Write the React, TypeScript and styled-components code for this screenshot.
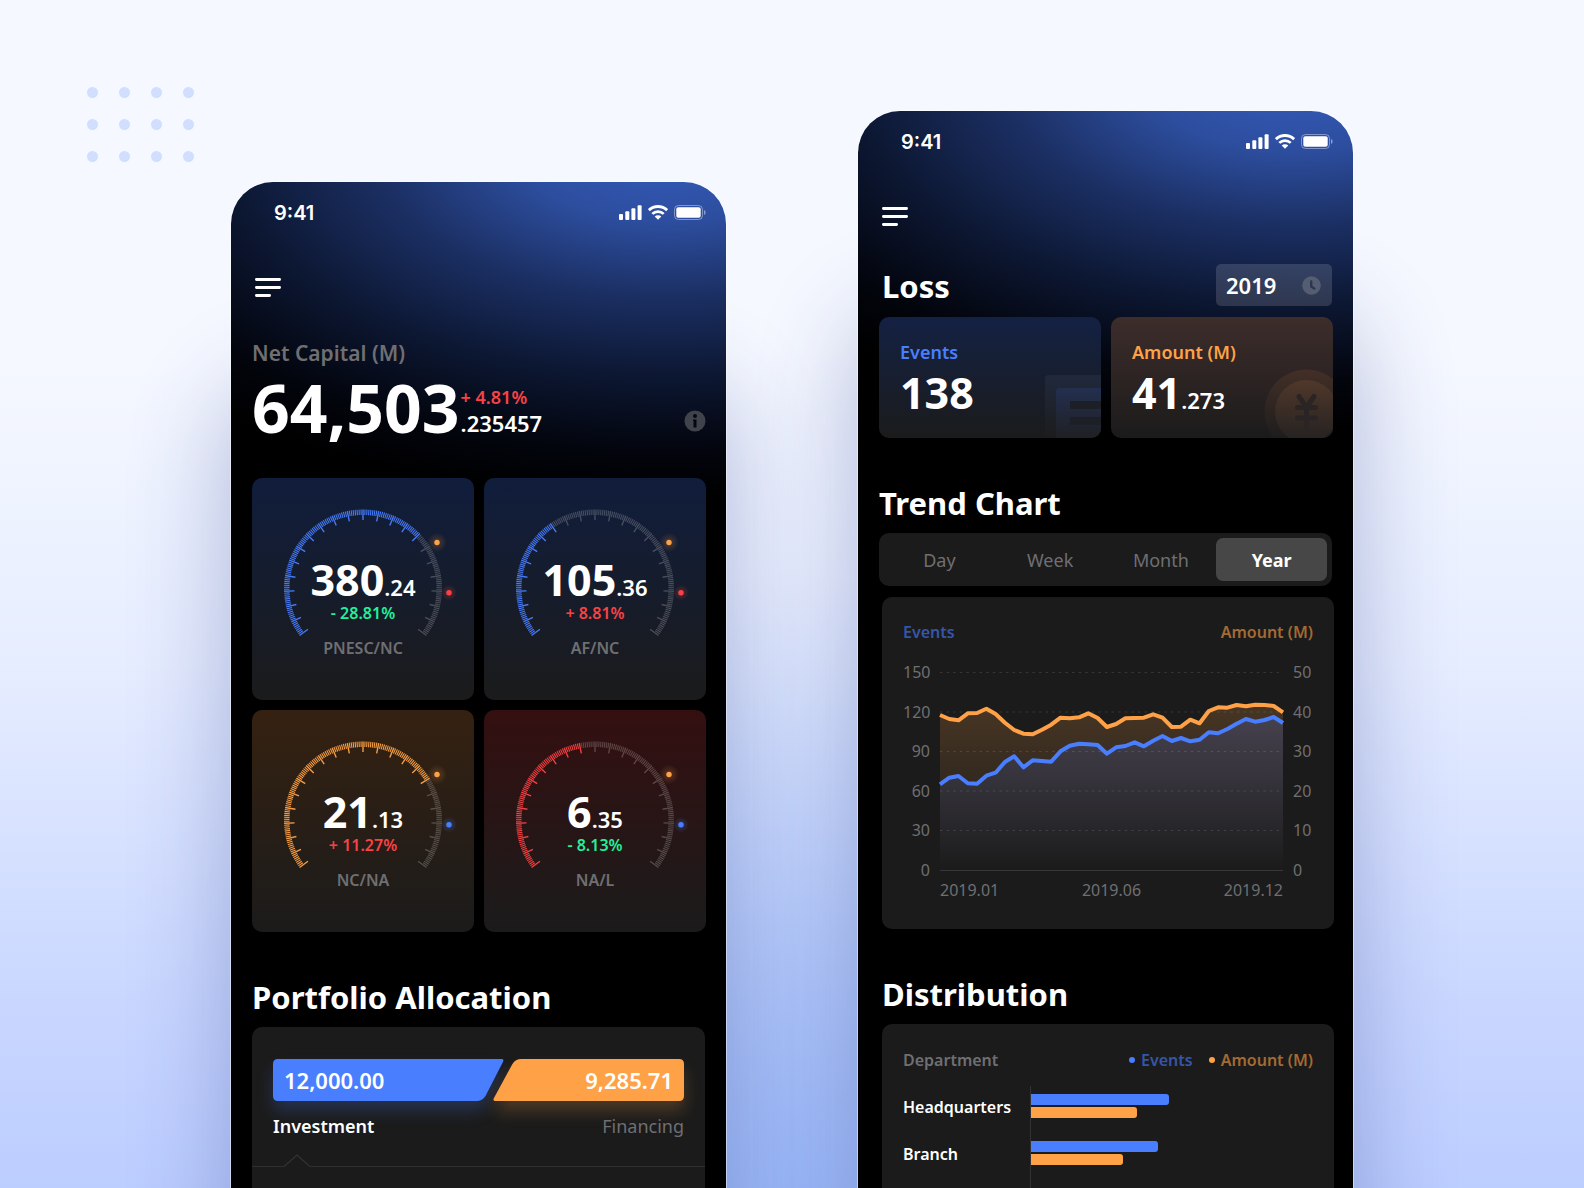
import React, { useState } from "react";
import styled, { createGlobalStyle, css } from "styled-components";

const color = {
  blue: "#497eff",
  orange: "#ffa247",
  red: "#fa4245",
  green: "#22f09a",
  panel: "#1b1b1b",
  muted: "#6f6f72",
};

const GlobalStyle = createGlobalStyle`
  *, *::before, *::after { box-sizing: border-box; }
  body {
    margin: 0;
    font-family: "Noto Sans", "Open Sans", sans-serif;
    color: #fff;
  }
  h2, p, ul { margin: 0; padding: 0; }
  button, select { font: inherit; color: inherit; border: 0; background: none; padding: 0; cursor: pointer; }
`;

const Page = styled.main`
  position: relative;
  display: flex;
  justify-content: center;
  gap: 132px;
  height: 100vh;
  overflow: hidden;
  background:
    radial-gradient(ellipse 340px 620px at 50% 100%, rgba(116, 160, 240, 0.45), rgba(116, 160, 240, 0) 100%),
    linear-gradient(180deg, #f5f8ff 0%, #f5f8ff 30%, #e6edff 56%, #c9d7ff 84%, #bccdff 100%);
`;

const DotGrid = styled.div`
  position: absolute;
  top: 87px;
  left: 87px;
  display: grid;
  grid-template-columns: repeat(4, 11px);
  gap: 21px;
`;

const DecorDot = styled.span`
  height: 11px;
  border-radius: 50%;
  background: #d2deff;
`;

const Phone = styled.section<{ $top: number }>`
  position: relative;
  flex: 0 1 495px;
  min-width: 0;
  margin-top: ${(p) => p.$top}px;
  margin-bottom: -120px;
  padding: 0 20px 0 21px;
  display: flex;
  flex-direction: column;
  border-radius: 42px 42px 0 0;
  background: radial-gradient(
      ellipse 680px 360px at 88% -40px,
      #365cbe 0%,
      #2d4e9f 22%,
      #1b2f63 43%,
      #0c1732 65%,
      #03050d 86%,
      #000 100%
    ),
    #000;
  box-shadow:
    0 0 0 1px rgba(255, 255, 255, 0.45),
    0 210px 100px rgba(34, 54, 130, 0.32);
`;

const StatusBar = styled.header`
  display: flex;
  align-items: center;
  justify-content: space-between;
  height: 62px;
  padding-left: 22px;
`;

const Clock = styled.time`
  font: 600 20px/24px Inter, sans-serif;
`;

const StatusIcons = styled.div`
  display: flex;
  align-items: center;
  gap: 6px;
  padding-bottom: 2px;
`;

const Nav = styled.nav`
  display: flex;
  align-items: center;
  height: 86px;
`;

const MenuButton = styled.button`
  display: flex;
  align-items: center;
  justify-content: center;
  width: 32px;
  height: 32px;
`;

const Caption = styled.p`
  margin-top: 9px;
  font-size: 21px;
  line-height: 28px;
  font-weight: 600;
  color: ${color.muted};
`;

const CapitalRow = styled.div`
  display: flex;
  align-items: flex-end;
  margin-top: 10px;
`;

const CapitalValue = styled.strong`
  font-size: 66px;
  line-height: 60px;
  font-weight: 700;
`;

const CapitalSide = styled.div`
  display: flex;
  flex-direction: column;
  padding-left: 1px;
`;

const Change = styled.span<{ $up: boolean; $large?: boolean }>`
  font-size: ${(p) => (p.$large ? 18 : 16)}px;
  line-height: 24px;
  font-weight: 600;
  color: ${(p) => (p.$up ? color.red : color.green)};
`;

const CapitalFraction = styled.span`
  font-size: 22px;
  line-height: 28px;
  font-weight: 600;
`;

const InfoButton = styled.button`
  width: 22px;
  height: 22px;
  margin: 0 0 5px auto;
`;

const GaugeGrid = styled.div`
  display: grid;
  grid-template-columns: 1fr 1fr;
  gap: 10px;
  margin-top: 41px;
`;

const GaugeCard = styled.article<{ $tint: string }>`
  display: grid;
  border-radius: 10px;
  background: linear-gradient(180deg, ${(p) => p.$tint}, ${color.panel});

  > * {
    grid-area: 1 / 1;
  }
`;

const GaugeDial = styled.svg`
  display: block;
  width: 100%;
`;

const GaugeText = styled.div`
  display: flex;
  flex-direction: column;
  align-items: center;
  padding-top: 81px;
`;

const Figure = styled.p`
  font-size: 43px;
  line-height: 42px;
  font-weight: 700;

  small {
    font-size: 22px;
    line-height: 1;
    font-weight: 600;
  }
`;

const GaugeLabel = styled.p`
  margin-top: 11px;
  font-size: 16px;
  line-height: 24px;
  font-weight: 600;
  color: ${color.muted};
`;

const Heading = styled.h2<{ $flush?: boolean; $shifted?: boolean }>`
  margin-top: ${(p) => (p.$flush ? 0 : 45)}px;
  margin-left: ${(p) => (p.$shifted ? 3 : 0)}px;
  font-size: 31px;
  line-height: 40px;
  font-weight: 700;
`;

const Panel = styled.div<{ $gap?: number; $shifted?: boolean }>`
  margin-top: ${(p) => p.$gap ?? 10}px;
  border-radius: 10px;
  background: ${color.panel};
  ${(p) =>
    p.$shifted &&
    css`
      margin-left: 3px;
      margin-right: -1px;
    `}
`;

const AllocationPanel = styled(Panel)`
  flex: 1;
  margin-right: 1px;
  padding-top: 32px;
`;

const AllocationBars = styled.div`
  display: grid;
  align-items: center;
  margin: 0 21px;

  > * {
    grid-area: 1 / 1;
  }
`;

const AllocationShape = styled.svg`
  display: block;
  width: 100%;
  height: 42px;
  overflow: visible;
`;

const AllocationValues = styled.div`
  z-index: 1;
  display: flex;
  justify-content: space-between;
  padding: 0 11px;
  font-size: 22px;
  line-height: 28px;
  font-weight: 600;
`;

const AllocationTabs = styled.div`
  display: flex;
  justify-content: space-between;
  margin: 13px 21px 0;
`;

const AllocationTab = styled.button<{ $active: boolean }>`
  font-size: 18px;
  line-height: 24px;
  font-weight: ${(p) => (p.$active ? 600 : 400)};
  color: ${(p) => (p.$active ? "#fff" : color.muted)};
`;

const NotchLine = styled.div`
  display: flex;
  align-items: flex-end;
  margin-top: 16px;

  svg {
    display: block;
  }
`;

const NotchRule = styled.span<{ $lead?: boolean }>`
  flex: ${(p) => (p.$lead ? "0 0 32px" : "1")};
  height: 1px;
  background: #2f2f2f;
`;

const LossHeader = styled.div`
  display: flex;
  align-items: flex-end;
  justify-content: space-between;
  margin-top: 5px;
`;

const YearPicker = styled.label`
  display: flex;
  align-items: center;
  justify-content: space-between;
  width: 116px;
  height: 42px;
  margin-right: 1px;
  padding: 0 11px 0 10px;
  border-radius: 5px;
  background: rgba(255, 255, 255, 0.14);
`;

const YearSelect = styled.select`
  appearance: none;
  font-size: 22px;
  line-height: 28px;
  font-weight: 600;

  option {
    color: #000;
  }
`;

const StatGrid = styled.div`
  display: grid;
  grid-template-columns: 1fr 1fr;
  gap: 10px;
  margin-top: 11px;
`;

const StatCard = styled.article<{ $tint: string }>`
  position: relative;
  height: 121px;
  padding: 23px 21px;
  overflow: hidden;
  border-radius: 10px;
  background: linear-gradient(180deg, ${(p) => p.$tint}, ${color.panel});

  svg {
    position: absolute;
    right: 0;
    bottom: 0;
  }
`;

const StatLabel = styled.p<{ $color: string }>`
  margin-bottom: 8px;
  font-size: 18px;
  line-height: 24px;
  font-weight: 600;
  color: ${(p) => p.$color};
`;

const Tabs = styled(Panel)`
  display: grid;
  grid-template-columns: repeat(4, 1fr);
  padding: 5px;
  margin-right: 1px;
`;

const Tab = styled.button<{ $active: boolean }>`
  height: 43px;
  border-radius: 7px;
  font-size: 18px;
  line-height: 24px;
  ${(p) =>
    p.$active
      ? css`
          background: #474747;
          font-weight: 700;
        `
      : css`
          color: ${color.muted};
        `}
`;

const ChartPanel = styled(Panel)`
  padding: 23px 21px 29px;
`;

const LegendRow = styled.div`
  display: flex;
  justify-content: space-between;
  font-size: 16px;
  line-height: 24px;
  font-weight: 600;
  color: ${color.muted};
`;

const LegendGroup = styled.div`
  display: flex;
  gap: 16px;
`;

const LegendName = styled.span<{ $color: string }>`
  color: ${(p) => p.$color};
`;

const LegendKey = styled.span<{ $color: string }>`
  display: flex;
  align-items: center;
  gap: 6px;

  &::before {
    content: "";
    width: 6px;
    height: 6px;
    border-radius: 50%;
    background: ${(p) => p.$color};
  }
`;

const ChartGrid = styled.div`
  display: grid;
  grid-template-columns: 27px 1fr 20px;
  column-gap: 10px;
  margin-top: 18px;
  font-size: 16px;
  line-height: 20px;
  color: ${color.muted};
`;

const AxisColumn = styled.div<{ $align: "left" | "right" }>`
  display: flex;
  flex-direction: column;
  justify-content: space-between;
  height: 218px;
  text-align: ${(p) => p.$align};
`;

const Plot = styled.svg`
  display: block;
  width: 100%;
  height: 218px;
`;

const DateRow = styled.div`
  grid-column: 2;
  display: flex;
  justify-content: space-between;
`;

const DistributionPanel = styled(Panel)`
  flex: 1;
  padding: 24px 21px;
`;

const BarList = styled.ul`
  margin-top: 14px;
  list-style: none;
`;

const BarRow = styled.li`
  display: flex;
  height: 47px;
`;

const BarName = styled.span`
  width: 127px;
  padding-top: 9px;
  font-size: 16px;
  line-height: 24px;
  font-weight: 600;
`;

const BarTrack = styled.div`
  flex: 1;
  display: flex;
  flex-direction: column;
  gap: 2px;
  padding-top: 8px;
  border-left: 1px solid #333;
`;

const Bar = styled.span<{ $color: string }>`
  height: 11px;
  border-radius: 0 3px 3px 0;
  background: ${(p) => p.$color};
`;

function StatusStrip() {
  return (
    <StatusBar>
      <Clock>9:41</Clock>
      <StatusIcons>
        <svg width="23" height="15" viewBox="0 0 23 15" fill="#fff" aria-label="Signal">
          <rect x="0" y="9" width="4" height="6" rx="1" />
          <rect x="6.3" y="6.3" width="4" height="8.7" rx="1" />
          <rect x="12.4" y="3.3" width="4" height="11.7" rx="1" />
          <rect x="18.6" y="0.3" width="4" height="14.7" rx="1" />
        </svg>
        <svg width="20" height="15" viewBox="0 0 20 15" aria-label="Wi-Fi">
          <path d="M0.9 5.2a13 13 0 0 1 18.2 0" stroke="#fff" strokeWidth="2.8" fill="none" />
          <path d="M4.3 8.9a8.2 8.2 0 0 1 11.4 0" stroke="#fff" strokeWidth="2.7" fill="none" />
          <path d="M10 14.7 6.7 11.5a4.7 4.7 0 0 1 6.6 0Z" fill="#fff" />
        </svg>
        <svg width="32" height="15" viewBox="0 0 32 15" aria-label="Battery">
          <rect x="0.5" y="0.5" width="28" height="14" rx="4" fill="none" stroke="#fff" strokeOpacity="0.4" />
          <rect x="2.3" y="2.3" width="24.4" height="10.4" rx="2" fill="#fff" />
          <path d="M30 5v5c1-.4 1.6-1.4 1.6-2.5S31 5.4 30 5Z" fill="#fff" fillOpacity="0.45" />
        </svg>
      </StatusIcons>
    </StatusBar>
  );
}

function Menu() {
  return (
    <Nav>
      <MenuButton aria-label="Open menu">
        <svg width="26" height="19" viewBox="0 0 26 19" stroke="#fff" strokeWidth="2.8" strokeLinecap="round">
          <path d="M1.4 1.5H24.6M1.4 9.5H24.6M1.4 17.5H14.6" />
        </svg>
      </MenuButton>
    </Nav>
  );
}

const MAJOR_STEP = 11.5;
const MAJOR_COUNT = 22;
const MINOR_PER_MAJOR = 8;

function tick(index: number) {
  const major = index % MINOR_PER_MAJOR === 0;
  const degrees = -MAJOR_STEP * (MAJOR_COUNT / 2) + (index * MAJOR_STEP) / MINOR_PER_MAJOR;
  const a = (degrees * Math.PI) / 180;
  const inner = major ? 68.5 : 73.5;
  const at = (r: number) => `${(111 + r * Math.sin(a)).toFixed(2)} ${(110.5 - r * Math.cos(a)).toFixed(2)}`;
  return { major, d: `M${at(79)}L${at(inner)}` };
}

const ticks = Array.from({ length: MAJOR_COUNT * MINOR_PER_MAJOR + 1 }, (_, i) => tick(i));

function Ticks({ from, to, stroke, opacity }: { from: number; to: number; stroke: string; opacity: number }) {
  const range = ticks.slice(from, to);
  const join = (major: boolean) =>
    range
      .filter((t) => t.major === major)
      .map((t) => t.d)
      .join("");
  return (
    <g stroke={stroke} strokeOpacity={opacity}>
      <path d={join(false)} strokeWidth="1.1" />
      <path d={join(true)} strokeWidth="1.4" />
    </g>
  );
}

type GaugeProps = {
  id: string;
  whole: string;
  fraction: string;
  change: string;
  up: boolean;
  label: string;
  filled: number;
  accent: string;
  marker: string;
  tint: string;
};

function Gauge({ id, whole, fraction, change, up, label, filled, accent, marker, tint }: GaugeProps) {
  const split = filled * MINOR_PER_MAJOR + 1;
  return (
    <GaugeCard $tint={tint}>
      <GaugeDial viewBox="0 0 222 222" aria-hidden="true">
        <defs>
          <radialGradient id={`${id}-upper`}>
            <stop offset="0" stopColor={color.orange} stopOpacity="0.24" />
            <stop offset="1" stopColor={color.orange} stopOpacity="0" />
          </radialGradient>
          <radialGradient id={`${id}-lower`}>
            <stop offset="0" stopColor={marker} stopOpacity="0.32" />
            <stop offset="1" stopColor={marker} stopOpacity="0" />
          </radialGradient>
        </defs>
        <Ticks from={split} to={ticks.length} stroke="#fff" opacity={0.22} />
        <Ticks from={0} to={split} stroke={accent} opacity={0.95} />
        <circle cx="185" cy="64.5" r="10" fill={`url(#${id}-upper)`} />
        <circle cx="185" cy="64.5" r="2.7" fill={color.orange} />
        <circle cx="197" cy="114.7" r="8" fill={`url(#${id}-lower)`} />
        <circle cx="197" cy="114.7" r="2.7" fill={marker} />
      </GaugeDial>
      <GaugeText>
        <Figure>
          {whole}
          <small>{fraction}</small>
        </Figure>
        <Change $up={up}>{change}</Change>
        <GaugeLabel>{label}</GaugeLabel>
      </GaugeText>
    </GaugeCard>
  );
}

const gauges: GaugeProps[] = [
  { id: "pnesc", whole: "380", fraction: ".24", change: "- 28.81%", up: false, label: "PNESC/NC", filled: 15, accent: color.blue, marker: color.red, tint: "#101d3c" },
  { id: "af", whole: "105", fraction: ".36", change: "+ 8.81%", up: true, label: "AF/NC", filled: 8, accent: color.blue, marker: color.red, tint: "#101d3c" },
  { id: "nc", whole: "21", fraction: ".13", change: "+ 11.27%", up: true, label: "NC/NA", filled: 16, accent: color.orange, marker: color.blue, tint: "#352111" },
  { id: "nal", whole: "6", fraction: ".35", change: "- 8.13%", up: false, label: "NA/L", filled: 10, accent: color.red, marker: color.blue, tint: "#340f10" },
];

function CapitalScreen() {
  const [side, setSide] = useState<"Investment" | "Financing">("Investment");
  return (
    <Phone $top={182}>
      <StatusStrip />
      <Menu />
      <Caption>Net Capital (M)</Caption>
      <CapitalRow>
        <CapitalValue>64,503</CapitalValue>
        <CapitalSide>
          <Change $up $large>
            + 4.81%
          </Change>
          <CapitalFraction>.235457</CapitalFraction>
        </CapitalSide>
        <InfoButton aria-label="About net capital">
          <svg width="22" height="22" viewBox="0 0 22 22">
            <circle cx="11" cy="11" r="10.5" fill="#40424c" />
            <circle cx="11" cy="6" r="2" fill="#05070f" />
            <path d="M9 9.5h3.5v8h-3v-6.5h-.5z" fill="#05070f" />
          </svg>
        </InfoButton>
      </CapitalRow>
      <GaugeGrid>
        {gauges.map((g) => (
          <Gauge key={g.id} {...g} />
        ))}
      </GaugeGrid>
      <Heading>Portfolio Allocation</Heading>
      <AllocationPanel>
        <AllocationBars>
          <AllocationShape viewBox="0 0 412 42" preserveAspectRatio="none" aria-hidden="true">
            <path
              d="M5 0H229Q232 0 230.5 3L213 37Q210 42 204 42H5Q0 42 0 37V5Q0 0 5 0Z"
              fill={color.blue}
              filter="drop-shadow(0 10px 8px rgba(73,126,255,.22))"
            />
            <path
              d="M249 0H407Q412 0 412 5V37Q412 42 407 42H223Q220 42 221.5 39L240 5Q243 0 249 0Z"
              fill={color.orange}
              filter="drop-shadow(0 10px 8px rgba(255,162,71,.22))"
            />
          </AllocationShape>
          <AllocationValues>
            <span>12,000.00</span>
            <span>9,285.71</span>
          </AllocationValues>
        </AllocationBars>
        <AllocationTabs>
          {(["Investment", "Financing"] as const).map((name) => (
            <AllocationTab key={name} $active={side === name} onClick={() => setSide(name)}>
              {name}
            </AllocationTab>
          ))}
        </AllocationTabs>
        <NotchLine>
          <NotchRule $lead />
          <svg width="26" height="13" viewBox="0 0 26 13" fill="none" stroke="#333" strokeWidth="1.3">
            <path d="M0 12.5 13 1 26 12.5" />
          </svg>
          <NotchRule />
        </NotchLine>
      </AllocationPanel>
    </Phone>
  );
}

const amountLine = [
  225, 237, 241, 220, 219, 206, 222, 248, 270, 281, 283, 269, 254, 233, 235, 232, 220, 234, 261, 252, 235, 234, 233,
  223, 233, 261, 260, 239, 250, 213, 202, 203, 195, 199, 194, 195, 198, 217,
];
const eventLine = [
  433, 413, 408, 430, 431, 407, 398, 366, 349, 382, 361, 363, 365, 334, 317, 311, 313, 315, 341, 322, 318, 307, 319,
  302, 288, 303, 294, 304, 299, 277, 280, 267, 251, 237, 245, 240, 231, 249,
];

const PLOT_WIDTH = 343;
const BASELINE = 208;

function toPoints(values: number[]) {
  return values
    .map((v, i) => `${((i * PLOT_WIDTH) / (values.length - 1)).toFixed(1)},${(v / 3 - 22).toFixed(1)}`)
    .join(" ");
}

function TrendPlot() {
  const amount = toPoints(amountLine);
  const events = toPoints(eventLine);
  const close = ` ${PLOT_WIDTH},${BASELINE} 0,${BASELINE}`;
  return (
    <Plot viewBox={`0 0 ${PLOT_WIDTH} 218`} preserveAspectRatio="none" role="img" aria-label="Events and amount in 2019" overflow="visible">
      <defs>
        <linearGradient id="amount-fill" gradientUnits="userSpaceOnUse" x1="0" y1="40" x2="0" y2={BASELINE}>
          <stop offset="0" stopColor={color.orange} stopOpacity="0.2" />
          <stop offset="1" stopColor={color.orange} stopOpacity="0" />
        </linearGradient>
        <linearGradient id="event-fill" gradientUnits="userSpaceOnUse" x1="0" y1="50" x2="0" y2={BASELINE}>
          <stop offset="0" stopColor="#46424f" />
          <stop offset="0.5" stopColor="#323037" />
          <stop offset="1" stopColor={color.panel} />
        </linearGradient>
      </defs>
      <polygon points={amount + close} fill="url(#amount-fill)" />
      <polygon points={events + close} fill="url(#event-fill)" />
      {[0, 1, 2, 3, 4].map((i) => (
        <line key={i} x1="0" x2={PLOT_WIDTH - 4} y1={10.5 + i * 39.5} y2={10.5 + i * 39.5} stroke="#fff" strokeOpacity="0.12" strokeDasharray="2.5 4.1" />
      ))}
      <line x1="0" x2={PLOT_WIDTH} y1={BASELINE + 0.5} y2={BASELINE + 0.5} stroke="#383838" />
      <polyline points={amount} fill="none" stroke={color.orange} strokeWidth="4" strokeLinejoin="round" />
      <polyline points={events} fill="none" stroke={color.blue} strokeWidth="4" strokeLinejoin="round" />
    </Plot>
  );
}

const departments = [
  { name: "Headquarters", events: 49, amount: 37.5 },
  { name: "Branch", events: 45, amount: 32.5 },
  { name: "", events: 0, amount: 0 },
];

const periods = ["Day", "Week", "Month", "Year"];
const leftAxis = [150, 120, 90, 60, 30, 0];
const rightAxis = [50, 40, 30, 20, 10, 0];

function LossScreen() {
  const [period, setPeriod] = useState("Year");
  return (
    <Phone $top={111}>
      <StatusStrip />
      <Menu />
      <LossHeader>
        <Heading $flush $shifted>
          Loss
        </Heading>
        <YearPicker>
          <YearSelect aria-label="Year" defaultValue="2019">
            <option>2019</option>
            <option>2018</option>
          </YearSelect>
          <svg width="19" height="19" viewBox="0 0 19 19" aria-hidden="true">
            <circle cx="9.5" cy="9.5" r="9.3" fill="#555d72" />
            <path d="M9.2 5.5V10.5L12.3 12.5" fill="none" stroke="#2c3650" strokeWidth="2.4" strokeLinecap="round" strokeLinejoin="round" />
          </svg>
        </YearPicker>
      </LossHeader>
      <StatGrid>
        <StatCard $tint="#132143">
          <svg width="56" height="64" viewBox="0 0 56 64" aria-hidden="true">
            <defs>
              <linearGradient id="doc-outer" x1="0" y1="0" x2="0" y2="1">
                <stop offset="0" stopColor="#20293c" />
                <stop offset="1" stopColor="#1c1c1d" />
              </linearGradient>
              <linearGradient id="doc-inner" gradientUnits="userSpaceOnUse" x1="0" y1="14" x2="0" y2="64">
                <stop offset="0" stopColor="#232f4f" />
                <stop offset="1" stopColor="#1f2023" />
              </linearGradient>
            </defs>
            <path d="M4 1H56V64H0V5Q0 1 4 1Z" fill="url(#doc-outer)" />
            <path d="M15 14H56V64H11V18Q11 14 15 14Z" fill="url(#doc-inner)" />
            <path d="M25 27H56V35H25ZM25 43H56V51H25Z" fill="#1d1f27" />
          </svg>
          <StatLabel $color={color.blue}>Events</StatLabel>
          <Figure>138</Figure>
        </StatCard>
        <StatCard $tint="#3d2d2b">
          <svg width="69" height="69" viewBox="0 0 69 69" aria-hidden="true">
            <defs>
              <linearGradient id="coin-outer" gradientUnits="userSpaceOnUse" x1="0" y1="0" x2="0" y2="69">
                <stop offset="0" stopColor="#432f27" />
                <stop offset="1" stopColor="#1e1d1d" />
              </linearGradient>
              <linearGradient id="coin-inner" gradientUnits="userSpaceOnUse" x1="0" y1="10" x2="0" y2="69">
                <stop offset="0" stopColor="#51382a" />
                <stop offset="1" stopColor="#262322" />
              </linearGradient>
            </defs>
            <circle cx="42.5" cy="42.5" r="42" fill="url(#coin-outer)" />
            <circle cx="42.5" cy="42.5" r="31.5" fill="url(#coin-inner)" />
            <path
              d="M35 27.5 42.5 38.5 50 27.5M42.5 38.5V59.5M33.5 38.5H51.5M33.5 49H51.5"
              fill="none"
              stroke="#2a2524"
              strokeWidth="5"
              strokeLinecap="round"
              strokeLinejoin="round"
            />
          </svg>
          <StatLabel $color={color.orange}>Amount (M)</StatLabel>
          <Figure>
            41<small>.273</small>
          </Figure>
        </StatCard>
      </StatGrid>
      <Heading>Trend Chart</Heading>
      <Tabs role="tablist">
        {periods.map((name) => (
          <Tab key={name} role="tab" aria-selected={period === name} $active={period === name} onClick={() => setPeriod(name)}>
            {name}
          </Tab>
        ))}
      </Tabs>
      <ChartPanel $gap={11} $shifted>
        <LegendRow>
          <LegendName $color="#3556a8">Events</LegendName>
          <LegendName $color="#a36a33">Amount (M)</LegendName>
        </LegendRow>
        <ChartGrid>
          <AxisColumn $align="right">
            {leftAxis.map((v) => (
              <span key={v}>{v}</span>
            ))}
          </AxisColumn>
          <TrendPlot />
          <AxisColumn $align="left">
            {rightAxis.map((v) => (
              <span key={v}>{v}</span>
            ))}
          </AxisColumn>
          <DateRow>
            <span>2019.01</span>
            <span>2019.06</span>
            <span>2019.12</span>
          </DateRow>
        </ChartGrid>
      </ChartPanel>
      <Heading $shifted>Distribution</Heading>
      <DistributionPanel $shifted>
        <LegendRow>
          <span>Department</span>
          <LegendGroup>
            <LegendKey $color={color.blue}>
              <LegendName $color="#3556a8">Events</LegendName>
            </LegendKey>
            <LegendKey $color={color.orange}>
              <LegendName $color="#a36a33">Amount (M)</LegendName>
            </LegendKey>
          </LegendGroup>
        </LegendRow>
        <BarList>
          {departments.map((d) => (
            <BarRow key={d.name}>
              <BarName>{d.name}</BarName>
              <BarTrack>
                <Bar $color={color.blue} style={{ width: `${d.events}%` }} />
                <Bar $color={color.orange} style={{ width: `${d.amount}%` }} />
              </BarTrack>
            </BarRow>
          ))}
        </BarList>
      </DistributionPanel>
    </Phone>
  );
}

export default function App() {
  return (
    <>
      <GlobalStyle />
      <Page>
        <DotGrid aria-hidden="true">
          {Array.from({ length: 12 }, (_, i) => (
            <DecorDot key={i} />
          ))}
        </DotGrid>
        <CapitalScreen />
        <LossScreen />
      </Page>
    </>
  );
}
